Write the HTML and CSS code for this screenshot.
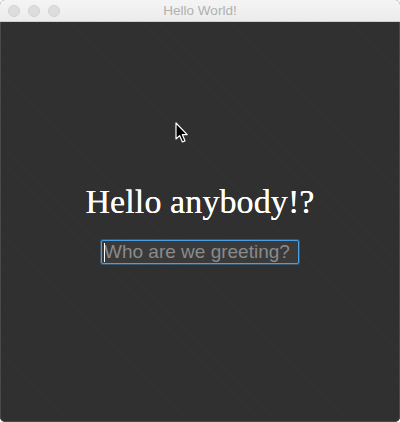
FILE: index.html
```html
<!DOCTYPE html>
<html>
<head>
<meta charset="utf-8">
<title>Hello World!</title>
<link rel="stylesheet" href="styles.css">
</head>
<body>
<div class="window">
  <div class="titlebar">
    <div class="lights">
      <span class="light"></span>
      <span class="light"></span>
      <span class="light"></span>
    </div>
    <div class="title">Hello World!</div>
  </div>
  <div class="content">
    <h1 class="greeting">Hello anybody!?</h1>
    <label class="field">
      <span class="caret"></span>
      <input class="name-input" type="text" placeholder="Who are we greeting?">
    </label>
    <svg class="pointer" width="14" height="22" viewBox="0 0 14 22">
      <path d="M1 1 L1 17 L4.6 13.6 L7.4 20 L10 18.9 L7.3 12.6 L12.2 12.6 Z" fill="#000" stroke="#fff" stroke-width="1.2" stroke-linejoin="round"/>
    </svg>
  </div>
</div>
</body>
</html>
```
FILE: styles.css
```css
html, body {
  margin: 0;
  padding: 0;
  width: 400px;
  height: 422px;
  overflow: hidden;
  background: #ffffff;
}
.window {
  width: 400px;
  height: 422px;
  display: flex;
  flex-direction: column;
  border-radius: 5px;
  overflow: hidden;
  background: #2f2f2f;
  box-sizing: border-box;
}
.titlebar {
  position: relative;
  height: 21px;
  flex: 0 0 21px;
  background: linear-gradient(#f4f4f4, #ececec);
  border-bottom: 1px solid #cfcfcf;
  display: flex;
  align-items: center;
  justify-content: center;
}
.lights {
  position: absolute;
  left: 8px;
  top: 5px;
  display: flex;
  gap: 8px;
}
.light {
  width: 12px;
  height: 12px;
  border-radius: 50%;
  background: #dddddd;
  border: 0.5px solid #d2d2d2;
  box-sizing: border-box;
}
.title {
  font-family: "Liberation Sans", Arial, sans-serif;
  font-size: 13.5px;
  color: #b0b0b0;
  line-height: 21px;
}
.content {
  position: relative;
  flex: 1;
  display: flex;
  flex-direction: column;
  align-items: center;
  padding-top: 160px;
  background-color: #2f2f2f;
  background-image: repeating-linear-gradient(45deg, rgba(255,255,255,0.015) 0 1px, transparent 1px 3px);
  border-left: 1px solid #4a4a4a;
  border-right: 1px solid #4a4a4a;
  border-bottom: 1px solid #4a4a4a;
  border-radius: 0 0 5px 5px;
}
.greeting {
  margin: 0;
  font-family: "Liberation Serif", "Times New Roman", serif;
  font-weight: normal;
  font-size: 34px;
  line-height: 40px;
  color: #ffffff;
  letter-spacing: 0.1px;
  text-shadow: 0 0 0.4px #ffffff;
}
.field {
  position: relative;
  display: block;
  margin-top: 18px;
  width: 198px;
  height: 24px;
  box-sizing: border-box;
  border: 1px solid #4a9fe4;
  box-shadow: 0 0 0 1px rgba(74, 159, 228, 0.35);
  border-radius: 2px;
  background: #3a3a3a;
}
.name-input {
  width: 100%;
  height: 100%;
  box-sizing: border-box;
  border: 0;
  outline: none;
  background: transparent;
  padding: 0 0 0 2px;
  font-family: "Liberation Sans", Arial, sans-serif;
  font-size: 19px;
  color: #dddddd;
  caret-color: transparent;
}
.name-input::placeholder {
  color: #8a8a8a;
  opacity: 1;
}
.caret {
  position: absolute;
  left: 2px;
  top: 2px;
  width: 1px;
  height: 19px;
  background: #ffffff;
}
.pointer {
  position: absolute;
  left: 174px;
  top: 100px;
}
```
